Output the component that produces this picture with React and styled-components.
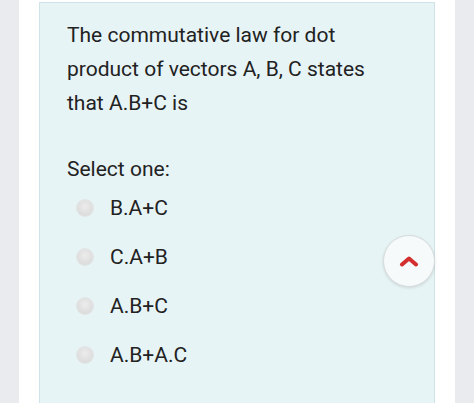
import React from "react";
import styled, { createGlobalStyle } from "styled-components";

const Global = createGlobalStyle`
  html, body { margin: 0; padding: 0; }
  body { background: #e9ebee; font-family: Roboto, "Noto Sans", Arial, sans-serif; }
`;

const Page = styled.div`
  width: 474px;
  height: 403px;
  overflow: hidden;
  background: #e9ebee;
  padding: 0 19px 0 19px;
  box-sizing: border-box;
  position: relative;
`;

const Panel = styled.div`
  background: #ffffff;
  height: 100%;
  padding: 2px 20px 0 20px;
  box-sizing: border-box;
`;

const Card = styled.div`
  background: #e7f4f6;
  border: 1px solid #cfe3e8;
  height: 420px;
  box-sizing: border-box;
  padding: 15px 20px 0 27px;
  color: #222222;
`;

const Question = styled.div`
  font-size: 21px;
  line-height: 34px;
`;

const Prompt = styled.div`
  font-size: 21px;
  line-height: 34px;
  margin-top: 32px;
`;

const Options = styled.div`
  display: flex;
  flex-direction: column;
  margin-top: -3px;
`;

const Option = styled.label`
  display: flex;
  align-items: center;
  height: 49px;
  font-size: 21px;
  padding-left: 10px;
  gap: 17px;
`;

const Radio = styled.span`
  width: 16px;
  height: 16px;
  border-radius: 50%;
  background: radial-gradient(circle at 50% 40%, #ececec 0%, #dcdcdc 70%, #cfcfcf 100%);
  box-shadow: 0 0 0 1px #e2e2e2;
  flex: none;
`;

const UpButton = styled.button`
  position: absolute;
  left: 383px;
  top: 235px;
  width: 52px;
  height: 52px;
  border-radius: 50%;
  border: 1px solid #d8dcdc;
  background: #f7fafa;
  box-shadow: 0 1px 3px rgba(0,0,0,0.12);
  display: flex;
  align-items: center;
  justify-content: center;
  padding: 0;
`;

const options = ["B.A+C", "C.A+B", "A.B+C", "A.B+A.C"];

export default function App() {
  return (
    <>
      <Global />
      <Page>
        <Panel>
          <Card>
            <Question>
              The commutative law for dot
              <br />
              product of vectors A, B, C states
              <br />
              that A.B+C is
            </Question>
            <Prompt>Select one:</Prompt>
            <Options>
              {options.map((o) => (
                <Option key={o}>
                  <Radio />
                  {o}
                </Option>
              ))}
            </Options>
          </Card>
        </Panel>
        <UpButton aria-label="Scroll up">
          <svg width="20" height="12" viewBox="0 0 20 12">
            <path d="M3 9.5 L10 3.5 L17 9.5" fill="none" stroke="#d32f2f" strokeWidth="4" strokeLinecap="round" strokeLinejoin="round" />
          </svg>
        </UpButton>
      </Page>
    </>
  );
}
